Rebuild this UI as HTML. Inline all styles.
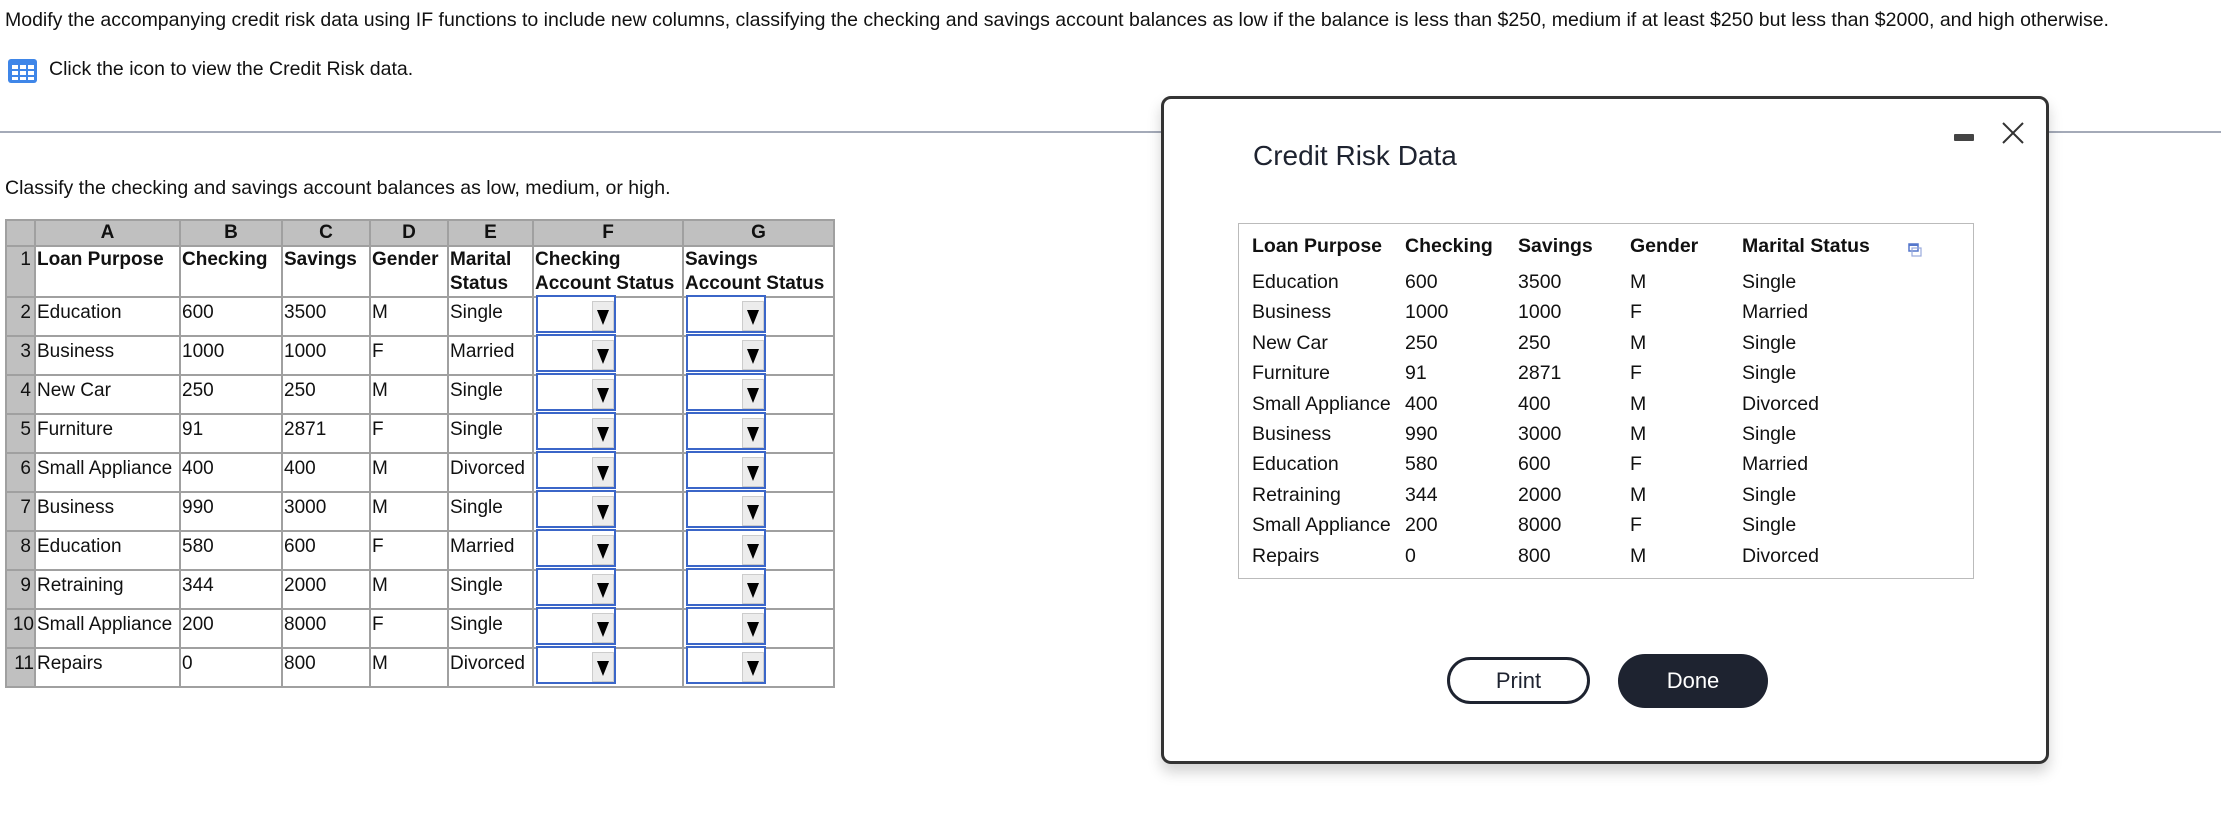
<!DOCTYPE html>
<html><head><meta charset="utf-8"><style>
*{margin:0;padding:0;box-sizing:border-box}
body{width:2221px;height:832px;background:#fff;font-family:"Liberation Sans",Arial,sans-serif;color:#111;position:relative;overflow:hidden}
.a{position:absolute;white-space:nowrap}
table.s{position:absolute;left:5px;top:219px;border-collapse:collapse;font-size:19px;table-layout:fixed}
table.s td{border:2px solid #a0a0a0;vertical-align:top;padding:4px 1px 0 1px;height:39px;line-height:22px;overflow:visible;white-space:nowrap}
table.s tr.h td{background:#c0c0c0;font-weight:bold;text-align:center;height:25px;padding:0;line-height:24px}
table.s td.n{background:#c0c0c0;text-align:right;padding-right:3px}
table.s tr.r1 td{height:50px;font-weight:bold;line-height:24px;padding-top:1px}
.sel{position:absolute;border:2px solid #3b66c8;width:80px;height:38px;background:#fff}
.sel b{position:absolute;right:0;top:4px;width:22px;height:30px;background:#ececec;border:1px solid #ccc}
.sel b:after{content:"";position:absolute;left:4px;top:8px;border-left:6px solid transparent;border-right:6px solid transparent;border-top:15px solid #000}
.modal{position:absolute;left:1161px;top:96px;width:888px;height:668px;border:3px solid #333;border-radius:10px;background:#fff;box-shadow:0 8px 14px rgba(0,0,0,.18)}
.box{position:absolute;left:1238px;top:223px;width:736px;height:356px;border:1px solid #bbb}
.dt{position:absolute;font-size:19.5px;white-space:nowrap}
</style></head><body>
<div class="a" style="left:5px;top:9px;font-size:19.5px">Modify the accompanying credit risk data using IF functions to include new columns, classifying the checking and savings account balances as low if the balance is less than $250, medium if at least $250 but less than $2000, and high otherwise.</div>
<svg class="a" style="left:8px;top:59px" width="29" height="24" viewBox="0 0 29 24"><rect x="0" y="0" width="29" height="24" rx="3" fill="#3f86e8"/><g fill="#fff"><rect x="4" y="6" width="6" height="4"/><rect x="12" y="6" width="6" height="4"/><rect x="20" y="6" width="6" height="4"/><rect x="4" y="12" width="6" height="4"/><rect x="12" y="12" width="6" height="4"/><rect x="20" y="12" width="6" height="4"/><rect x="4" y="18" width="6" height="3"/><rect x="12" y="18" width="6" height="3"/><rect x="20" y="18" width="6" height="3"/></g></svg>
<div class="a" style="left:49px;top:58px;font-size:19.5px">Click the icon to view the Credit Risk data.</div>
<div class="a" style="left:0;top:131px;width:2221px;height:2px;background:#a4aab8"></div>
<div class="a" style="left:5px;top:177px;font-size:19.5px">Classify the checking and savings account balances as low, medium, or high.</div>
<table class="s">
<colgroup><col style="width:29px"><col style="width:145px"><col style="width:102px"><col style="width:88px"><col style="width:78px"><col style="width:85px"><col style="width:150px"><col style="width:151px"></colgroup>
<tr class="h"><td></td><td>A</td><td>B</td><td>C</td><td>D</td><td>E</td><td>F</td><td>G</td></tr>
<tr class="r1"><td class="n" style="font-weight:normal">1</td><td>Loan Purpose</td><td>Checking</td><td>Savings</td><td>Gender</td><td>Marital<br>Status</td><td>Checking<br>Account Status</td><td>Savings<br>Account Status</td></tr>
<tr><td class="n">2</td><td>Education</td><td>600</td><td>3500</td><td>M</td><td>Single</td><td></td><td></td></tr>
<tr><td class="n">3</td><td>Business</td><td>1000</td><td>1000</td><td>F</td><td>Married</td><td></td><td></td></tr>
<tr><td class="n">4</td><td>New Car</td><td>250</td><td>250</td><td>M</td><td>Single</td><td></td><td></td></tr>
<tr><td class="n">5</td><td>Furniture</td><td>91</td><td>2871</td><td>F</td><td>Single</td><td></td><td></td></tr>
<tr><td class="n">6</td><td>Small Appliance</td><td>400</td><td>400</td><td>M</td><td>Divorced</td><td></td><td></td></tr>
<tr><td class="n">7</td><td>Business</td><td>990</td><td>3000</td><td>M</td><td>Single</td><td></td><td></td></tr>
<tr><td class="n">8</td><td>Education</td><td>580</td><td>600</td><td>F</td><td>Married</td><td></td><td></td></tr>
<tr><td class="n">9</td><td>Retraining</td><td>344</td><td>2000</td><td>M</td><td>Single</td><td></td><td></td></tr>
<tr><td class="n" style="padding-right:0">10</td><td>Small Appliance</td><td>200</td><td>8000</td><td>F</td><td>Single</td><td></td><td></td></tr>
<tr><td class="n" style="padding-right:0">11</td><td>Repairs</td><td>0</td><td>800</td><td>M</td><td>Divorced</td><td></td><td></td></tr>
</table>
<div class="sel" style="left:536px;top:295px"><b></b></div><div class="sel" style="left:686px;top:295px"><b></b></div>
<div class="sel" style="left:536px;top:334px"><b></b></div><div class="sel" style="left:686px;top:334px"><b></b></div>
<div class="sel" style="left:536px;top:373px"><b></b></div><div class="sel" style="left:686px;top:373px"><b></b></div>
<div class="sel" style="left:536px;top:412px"><b></b></div><div class="sel" style="left:686px;top:412px"><b></b></div>
<div class="sel" style="left:536px;top:451px"><b></b></div><div class="sel" style="left:686px;top:451px"><b></b></div>
<div class="sel" style="left:536px;top:490px"><b></b></div><div class="sel" style="left:686px;top:490px"><b></b></div>
<div class="sel" style="left:536px;top:529px"><b></b></div><div class="sel" style="left:686px;top:529px"><b></b></div>
<div class="sel" style="left:536px;top:568px"><b></b></div><div class="sel" style="left:686px;top:568px"><b></b></div>
<div class="sel" style="left:536px;top:607px"><b></b></div><div class="sel" style="left:686px;top:607px"><b></b></div>
<div class="sel" style="left:536px;top:646px"><b></b></div><div class="sel" style="left:686px;top:646px"><b></b></div>

<div class="modal"></div>
<div class="a" style="left:1253px;top:140px;font-size:28px;color:#1e2330">Credit Risk Data</div>
<div class="a" style="left:1954px;top:134px;width:20px;height:7px;background:#444;border-radius:1px"></div>
<svg class="a" style="left:2001px;top:122px" width="24" height="22" viewBox="0 0 24 22"><path d="M2 1L22 21M22 1L2 21" stroke="#333" stroke-width="2"/></svg>
<div class="box"></div>
<div class="dt" style="left:1252px;top:235px;font-weight:bold">Loan Purpose</div>
<div class="dt" style="left:1405px;top:235px;font-weight:bold">Checking</div>
<div class="dt" style="left:1518px;top:235px;font-weight:bold">Savings</div>
<div class="dt" style="left:1630px;top:235px;font-weight:bold">Gender</div>
<div class="dt" style="left:1742px;top:235px;font-weight:bold">Marital Status</div>
<svg class="a" style="left:1908px;top:243px" width="14" height="14" viewBox="0 0 14 14"><rect x="1" y="1" width="9" height="7" fill="#fff" stroke="#5577cc" stroke-width="1.5"/><rect x="4" y="5" width="9" height="8" fill="none" stroke="#99aadd" stroke-width="1.2"/><rect x="1" y="1" width="9" height="2" fill="#5577cc"/></svg>
<div class="dt" style="left:1252px;top:267px;line-height:30.4px">Education<br>Business<br>New Car<br>Furniture<br>Small Appliance<br>Business<br>Education<br>Retraining<br>Small Appliance<br>Repairs</div>
<div class="dt" style="left:1405px;top:267px;line-height:30.4px">600<br>1000<br>250<br>91<br>400<br>990<br>580<br>344<br>200<br>0</div>
<div class="dt" style="left:1518px;top:267px;line-height:30.4px">3500<br>1000<br>250<br>2871<br>400<br>3000<br>600<br>2000<br>8000<br>800</div>
<div class="dt" style="left:1630px;top:267px;line-height:30.4px">M<br>F<br>M<br>F<br>M<br>M<br>F<br>M<br>F<br>M</div>
<div class="dt" style="left:1742px;top:267px;line-height:30.4px">Single<br>Married<br>Single<br>Single<br>Divorced<br>Single<br>Married<br>Single<br>Single<br>Divorced</div>
<div class="a" style="left:1447px;top:657px;width:143px;height:47px;border:3px solid #1e2330;border-radius:24px;text-align:center;line-height:41px;font-size:22px;color:#1e2330">Print</div>
<div class="a" style="left:1618px;top:654px;width:150px;height:54px;background:#1e2330;border-radius:27px;text-align:center;line-height:54px;font-size:22px;color:#fff">Done</div>
</body></html>
